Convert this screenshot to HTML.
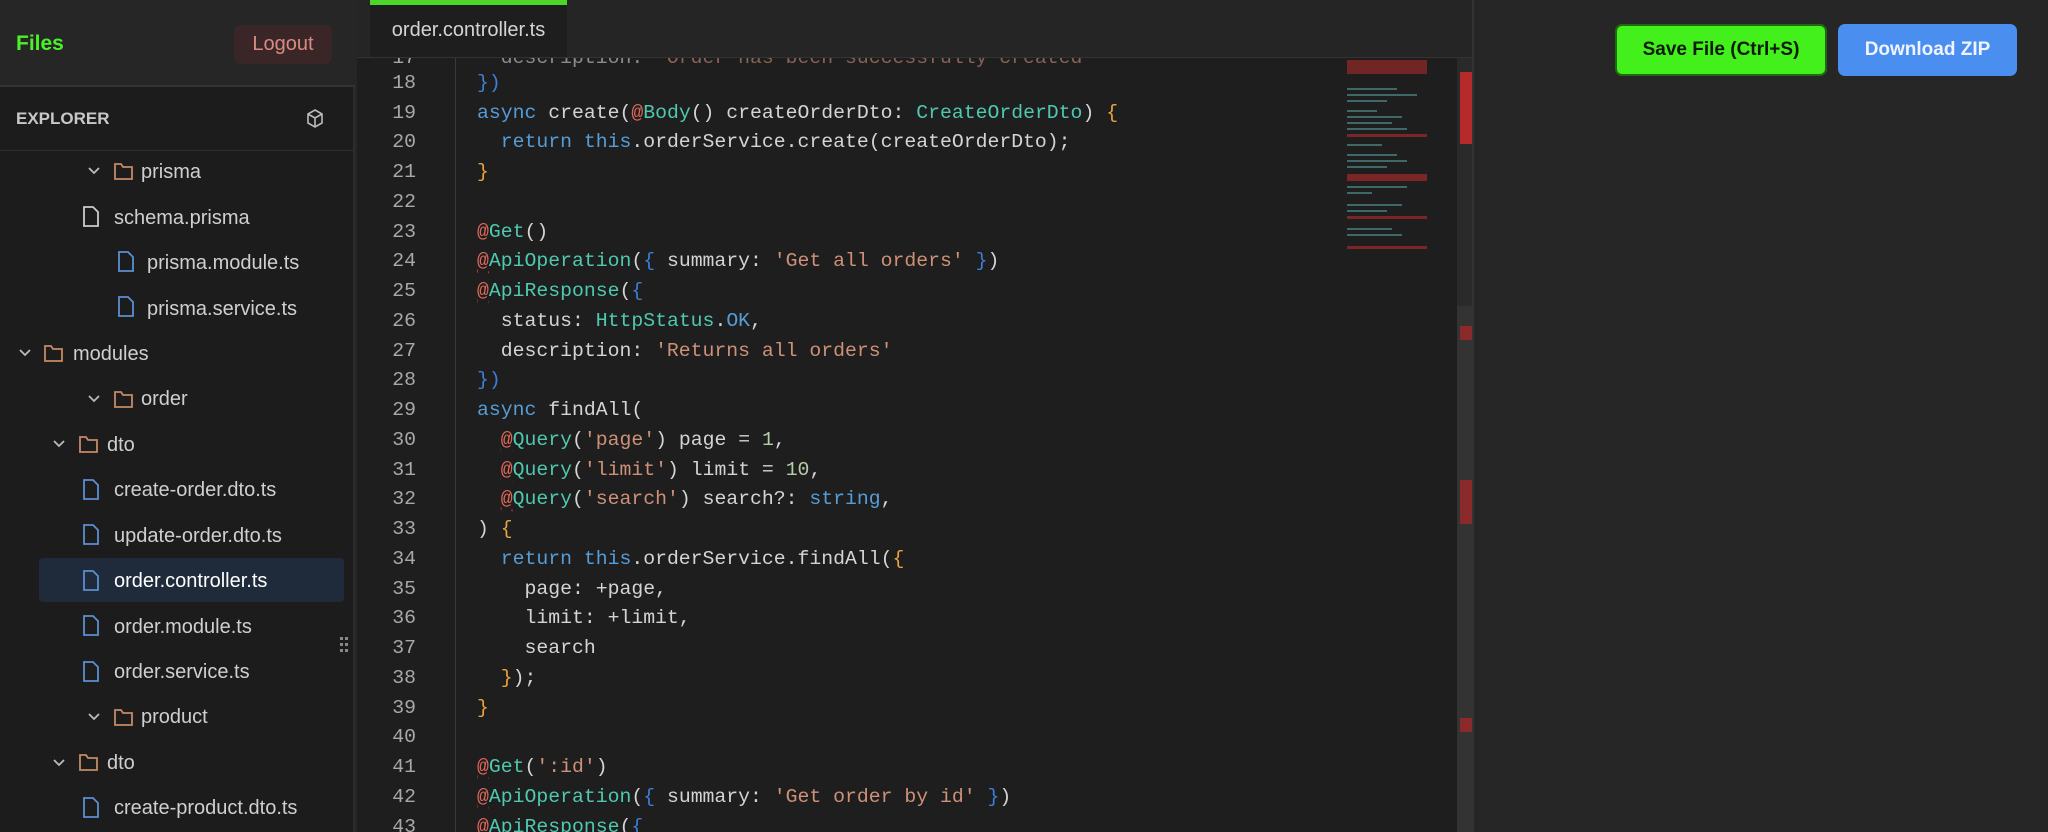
<!DOCTYPE html>
<html><head><meta charset="utf-8"><style>
*{margin:0;padding:0;box-sizing:border-box}
body{width:2048px;height:832px;overflow:hidden;background:#262626;font-family:"Liberation Sans",sans-serif;position:relative}
.side{position:absolute;left:0;top:0;width:355px;height:832px;background:#1c1c1c;border-right:2px solid #2c2c2c}
.head{position:absolute;left:0;top:0;width:355px;height:87px;background:#262626;border-bottom:2px solid #333}
.files{position:absolute;left:16px;top:32px;color:#4cf02a;font-weight:bold;font-size:21px}
.logout{position:absolute;left:234px;top:25px;width:98px;height:39px;background:#3a2626;border-radius:7px;color:#d98b82;font-size:20px;text-align:center;line-height:39px}
.expl{position:absolute;left:16px;top:109px;color:#c8c8c8;font-weight:bold;font-size:17px}
.exline{position:absolute;left:0;top:150px;width:353px;height:1px;background:#2e2e2e}
.row{position:absolute;height:30px;line-height:30px;color:#cfcfcf;font-size:20px;white-space:nowrap}
.sel{position:absolute;left:39px;top:558px;width:305px;height:44px;background:#1f2a3a;border-radius:4px}
.ed{position:absolute;left:357px;top:0;width:1115px;height:832px;background:#1e1e1e;overflow:hidden}
.tabbar{position:absolute;left:0;top:0;width:1115px;height:58px;background:#252526;border-bottom:1px solid #333}
.tab{position:absolute;left:13px;top:0;width:197px;height:57px;background:#1e1e1e;color:#d4d4d4;font-size:20px;line-height:50px;text-align:center;border-top:5px solid #4cd62a}
.code{position:absolute;left:0;top:58px;width:1115px;height:774px;overflow:hidden}
.ln{position:absolute;left:0;width:59px;text-align:right;color:#a8a8a8;font-family:"Liberation Mono",monospace;font-size:19.8px;line-height:29.75px;height:29.75px}
.cl{position:absolute;left:120px;font-family:"Liberation Mono",monospace;font-size:19.8px;line-height:29.75px;height:29.75px;color:#d4d4d4;white-space:pre}
.k{color:#569cd6}.t{color:#4ec9b0}.s{color:#ce9178}.a{color:#e0685a;text-decoration:underline wavy #c0392b}.y{color:#e8a33d}.b{color:#3b7fd6}.n{color:#b5cea8}
.guide{position:absolute;left:98px;top:0;width:1px;height:774px;background:#3a3a3a}
.right{position:absolute;left:1472px;top:0;width:576px;height:832px;background:#262626;border-left:2px solid #333}
.btn{position:absolute;top:24px;height:52px;border-radius:7px;font-weight:bold;font-size:19px;display:flex;align-items:center;justify-content:center}
.mm{position:absolute;left:8px;height:2px;background:#4a7a7a;opacity:.8}
.mr{position:absolute;left:8px;width:80px;background:#7a2626}
</style></head><body>
<div class="side">
<div class="head"><div class="files">Files</div><div class="logout">Logout</div></div>
<div class="expl">EXPLORER</div>
<svg style="position:absolute;left:306px;top:109px" width="18" height="20" viewBox="0 0 18 20" fill="none" stroke="#bbb" stroke-width="1.6"><path d="M9 1 L16 5 V14 L9 18 L2 14 V5 Z M2 5 L9 9 L16 5 M9 9 V18"/></svg>
<div class="exline"></div>
<div class="sel"></div>
<svg width="355" height="832" style="position:absolute;left:0;top:0" fill="none" stroke-width="1.8">
<g stroke="#bbb"><path d="M89 168 l5 5 l5 -5"/><path d="M20 350 l5 5 l5 -5"/><path d="M89 396 l5 5 l5 -5"/><path d="M54 441 l5 5 l5 -5"/><path d="M89 714 l5 5 l5 -5"/><path d="M54 760 l5 5 l5 -5"/></g>
<g stroke="#c58a66"><path d="M115 164 h6 l2 3 h9 v12 h-17 z"/><path d="M45 346 h6 l2 3 h9 v12 h-17 z"/><path d="M115 392 h6 l2 3 h9 v12 h-17 z"/><path d="M80 437 h6 l2 3 h9 v12 h-17 z"/><path d="M115 710 h6 l2 3 h9 v12 h-17 z"/><path d="M80 755 h6 l2 3 h9 v12 h-17 z"/></g>
<path d="M84 207 h9 l5 5 v14 h-14 z" stroke="#ccc"/>
<g stroke="#5b8fd0"><path d="M119 252 h9 l5 5 v14 h-14 z"/><path d="M119 297 h9 l5 5 v14 h-14 z"/><path d="M84 480 h9 l5 5 v14 h-14 z"/><path d="M84 525 h9 l5 5 v14 h-14 z"/><path d="M84 571 h9 l5 5 v14 h-14 z"/><path d="M84 616 h9 l5 5 v14 h-14 z"/><path d="M84 662 h9 l5 5 v14 h-14 z"/><path d="M84 798 h9 l5 5 v14 h-14 z"/></g>
<g fill="#888" stroke="none"><rect x="340" y="637" width="3" height="3"/><rect x="345" y="637" width="3" height="3"/><rect x="340" y="643" width="3" height="3"/><rect x="345" y="643" width="3" height="3"/><rect x="340" y="649" width="3" height="3"/><rect x="345" y="649" width="3" height="3"/></g>
</svg>
<div class="row" style="left:141px;top:157px">prisma</div>
<div class="row" style="left:114px;top:203px">schema.prisma</div>
<div class="row" style="left:147px;top:248px">prisma.module.ts</div>
<div class="row" style="left:147px;top:294px">prisma.service.ts</div>
<div class="row" style="left:73px;top:339px">modules</div>
<div class="row" style="left:141px;top:384px">order</div>
<div class="row" style="left:107px;top:430px">dto</div>
<div class="row" style="left:114px;top:475px">create-order.dto.ts</div>
<div class="row" style="left:114px;top:521px">update-order.dto.ts</div>
<div class="row" style="left:114px;top:566px;color:#fff">order.controller.ts</div>
<div class="row" style="left:114px;top:612px">order.module.ts</div>
<div class="row" style="left:114px;top:657px">order.service.ts</div>
<div class="row" style="left:141px;top:702px">product</div>
<div class="row" style="left:107px;top:748px">dto</div>
<div class="row" style="left:114px;top:793px">create-product.dto.ts</div>
</div>
<div class="ed">
<div class="tabbar"><div class="tab">order.controller.ts</div></div>
<div class="code">
<div class="guide"></div>
<div style="position:absolute;left:982px;top:0;width:111px;height:220px">
<div class="mr" style="top:2px;height:14px;opacity:.9"></div>
<div class="mm" style="top:30px;width:50px"></div><div class="mm" style="top:36px;width:70px"></div><div class="mm" style="top:42px;width:40px"></div>
<div class="mm" style="top:52px;width:30px"></div><div class="mm" style="top:58px;width:55px"></div><div class="mm" style="top:64px;width:45px"></div><div class="mm" style="top:70px;width:60px"></div>
<div class="mr" style="top:76px;height:3px"></div>
<div class="mm" style="top:86px;width:35px"></div><div class="mm" style="top:96px;width:50px"></div><div class="mm" style="top:102px;width:60px"></div><div class="mm" style="top:108px;width:40px"></div>
<div class="mr" style="top:116px;height:7px"></div>
<div class="mm" style="top:128px;width:60px"></div><div class="mm" style="top:134px;width:25px"></div><div class="mm" style="top:146px;width:55px"></div><div class="mm" style="top:152px;width:40px"></div>
<div class="mr" style="top:158px;height:3px"></div>
<div class="mm" style="top:170px;width:45px"></div><div class="mm" style="top:176px;width:55px"></div>
<div class="mr" style="top:188px;height:3px"></div>
</div>
<div style="position:absolute;left:1100px;top:0;width:15px;height:774px;background:#2a2a2a"></div>
<div style="position:absolute;left:1100px;top:248px;width:15px;height:526px;background:#333"></div>
<div style="position:absolute;left:1103px;top:14px;width:12px;height:72px;background:#b52a2a"></div>
<div style="position:absolute;left:1103px;top:268px;width:12px;height:14px;background:#8a2a2a"></div>
<div style="position:absolute;left:1103px;top:422px;width:12px;height:44px;background:#8a2a2a"></div>
<div style="position:absolute;left:1103px;top:660px;width:12px;height:14px;background:#8a2a2a"></div>
</div>
</div>
<div class="right">
<div class="btn" style="left:141px;width:212px;background:#44f01c;color:#0c1a08;border:2px solid #1f6a10">Save File (Ctrl+S)</div>
<div class="btn" style="left:364px;width:179px;background:#4a8ef0;color:#f0f4ff">Download ZIP</div>
</div>
<div style="position:absolute;left:357px;top:58px;width:1115px;height:774px;overflow:hidden;pointer-events:none">
<div class="ln" style="top:-14px">17</div><div class="cl" style="top:-14px;opacity:.6">  description: <span class="s">'Order has been successfully created'</span></div>
<div class="ln" style="top:10.75px">18</div><div class="cl" style="top:10.75px"><span class="b">})</span></div>
<div class="ln" style="top:40.5px">19</div><div class="cl" style="top:40.5px"><span class="k">async</span> create(<span class="a">@</span><span class="t">Body</span>() createOrderDto: <span class="t">CreateOrderDto</span>) <span class="y">{</span></div>
<div class="ln" style="top:70.25px">20</div><div class="cl" style="top:70.25px">  <span class="k">return this</span>.orderService.create(createOrderDto);</div>
<div class="ln" style="top:100px">21</div><div class="cl" style="top:100px"><span class="y">}</span></div>
<div class="ln" style="top:129.75px">22</div>
<div class="ln" style="top:159.5px">23</div><div class="cl" style="top:159.5px"><span class="a">@</span><span class="t">Get</span>()</div>
<div class="ln" style="top:189.25px">24</div><div class="cl" style="top:189.25px"><span class="a">@</span><span class="t">ApiOperation</span>(<span class="b">{</span> summary: <span class="s">'Get all orders'</span> <span class="b">}</span>)</div>
<div class="ln" style="top:219px">25</div><div class="cl" style="top:219px"><span class="a">@</span><span class="t">ApiResponse</span>(<span class="b">{</span></div>
<div class="ln" style="top:248.75px">26</div><div class="cl" style="top:248.75px">  status: <span class="t">HttpStatus</span>.<span class="k">OK</span>,</div>
<div class="ln" style="top:278.5px">27</div><div class="cl" style="top:278.5px">  description: <span class="s">'Returns all orders'</span></div>
<div class="ln" style="top:308.25px">28</div><div class="cl" style="top:308.25px"><span class="b">})</span></div>
<div class="ln" style="top:338px">29</div><div class="cl" style="top:338px"><span class="k">async</span> findAll(</div>
<div class="ln" style="top:367.75px">30</div><div class="cl" style="top:367.75px">  <span class="a">@</span><span class="t">Query</span>(<span class="s">'page'</span>) page = <span class="n">1</span>,</div>
<div class="ln" style="top:397.5px">31</div><div class="cl" style="top:397.5px">  <span class="a">@</span><span class="t">Query</span>(<span class="s">'limit'</span>) limit = <span class="n">10</span>,</div>
<div class="ln" style="top:427.25px">32</div><div class="cl" style="top:427.25px">  <span class="a">@</span><span class="t">Query</span>(<span class="s">'search'</span>) search?: <span class="k">string</span>,</div>
<div class="ln" style="top:457px">33</div><div class="cl" style="top:457px">) <span class="y">{</span></div>
<div class="ln" style="top:486.75px">34</div><div class="cl" style="top:486.75px">  <span class="k">return this</span>.orderService.findAll(<span class="y">{</span></div>
<div class="ln" style="top:516.5px">35</div><div class="cl" style="top:516.5px">    page: +page,</div>
<div class="ln" style="top:546.25px">36</div><div class="cl" style="top:546.25px">    limit: +limit,</div>
<div class="ln" style="top:576px">37</div><div class="cl" style="top:576px">    search</div>
<div class="ln" style="top:605.75px">38</div><div class="cl" style="top:605.75px">  <span class="y">}</span>);</div>
<div class="ln" style="top:635.5px">39</div><div class="cl" style="top:635.5px"><span class="y">}</span></div>
<div class="ln" style="top:665.25px">40</div>
<div class="ln" style="top:695px">41</div><div class="cl" style="top:695px"><span class="a">@</span><span class="t">Get</span>(<span class="s">':id'</span>)</div>
<div class="ln" style="top:724.75px">42</div><div class="cl" style="top:724.75px"><span class="a">@</span><span class="t">ApiOperation</span>(<span class="b">{</span> summary: <span class="s">'Get order by id'</span> <span class="b">}</span>)</div>
<div class="ln" style="top:754.5px">43</div><div class="cl" style="top:754.5px"><span class="a">@</span><span class="t">ApiResponse</span>(<span class="b">{</span></div>
</div>
</body></html>
